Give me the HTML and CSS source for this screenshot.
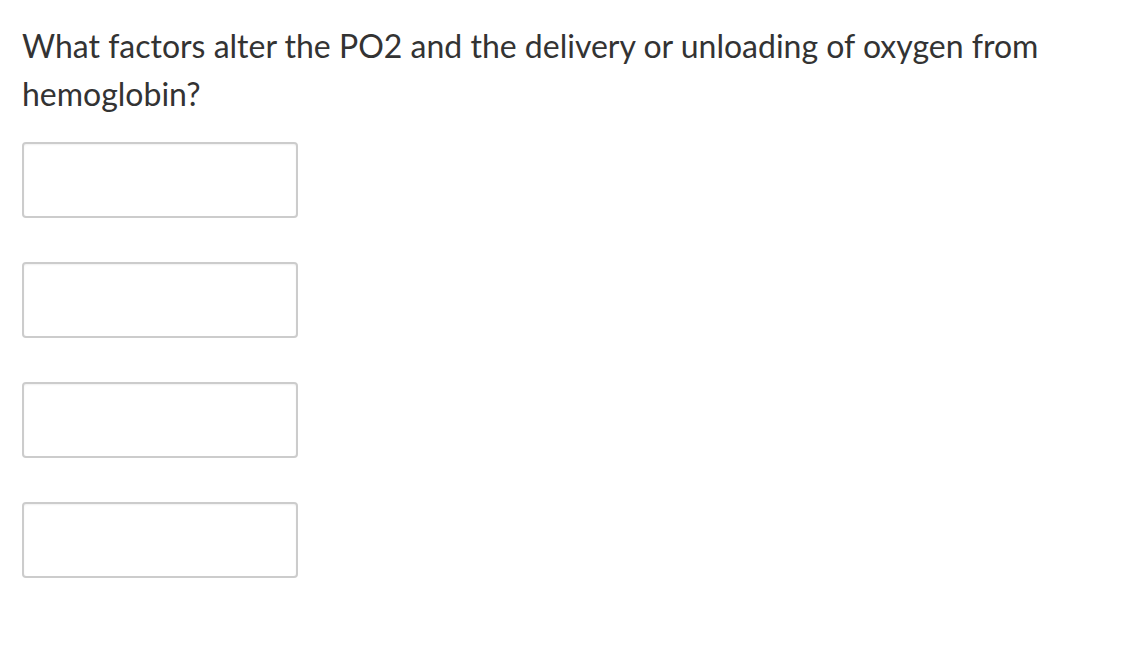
FILE: index.html
```html
<!DOCTYPE html>
<html lang="en">
  <head>
    <meta charset="UTF-8" />
    <title>Question</title>
    <link rel="stylesheet" href="styles.css">
  </head>
  <body>
    <div class="question">
      <p class="question-text">
        What factors alter the PO2 and the delivery or unloading of oxygen from hemoglobin?
      </p>

      <div class="answers">
        <input type="text" class="answer-box" />
        <input type="text" class="answer-box" />
        <input type="text" class="answer-box" />
        <input type="text" class="answer-box" />
      </div>
    </div>
  </body>
</html>
```

FILE: styles.css
```css
body {
  font-family: Lato, "Open Sans", sans-serif;
  background-color: #ffffff;
  color: #333333;
  margin: 0;
  padding: 22px;
}

.question-text {
  font-size: 32px;
  line-height: 48px;
  margin: 0 0 24px 0;
}

.answers {
  display: flex;
  flex-direction: column;
  gap: 44px;
}

.answer-box {
  width: 276px;
  height: 76px;
  box-sizing: border-box;
  margin: 0;
  border: 2px solid #cccccc;
  border-radius: 4px;
  box-shadow: inset 0 1px 2px rgba(0, 0, 0, 0.06); /* faint top shade */
  background: #ffffff;
  outline: none;
}
```
